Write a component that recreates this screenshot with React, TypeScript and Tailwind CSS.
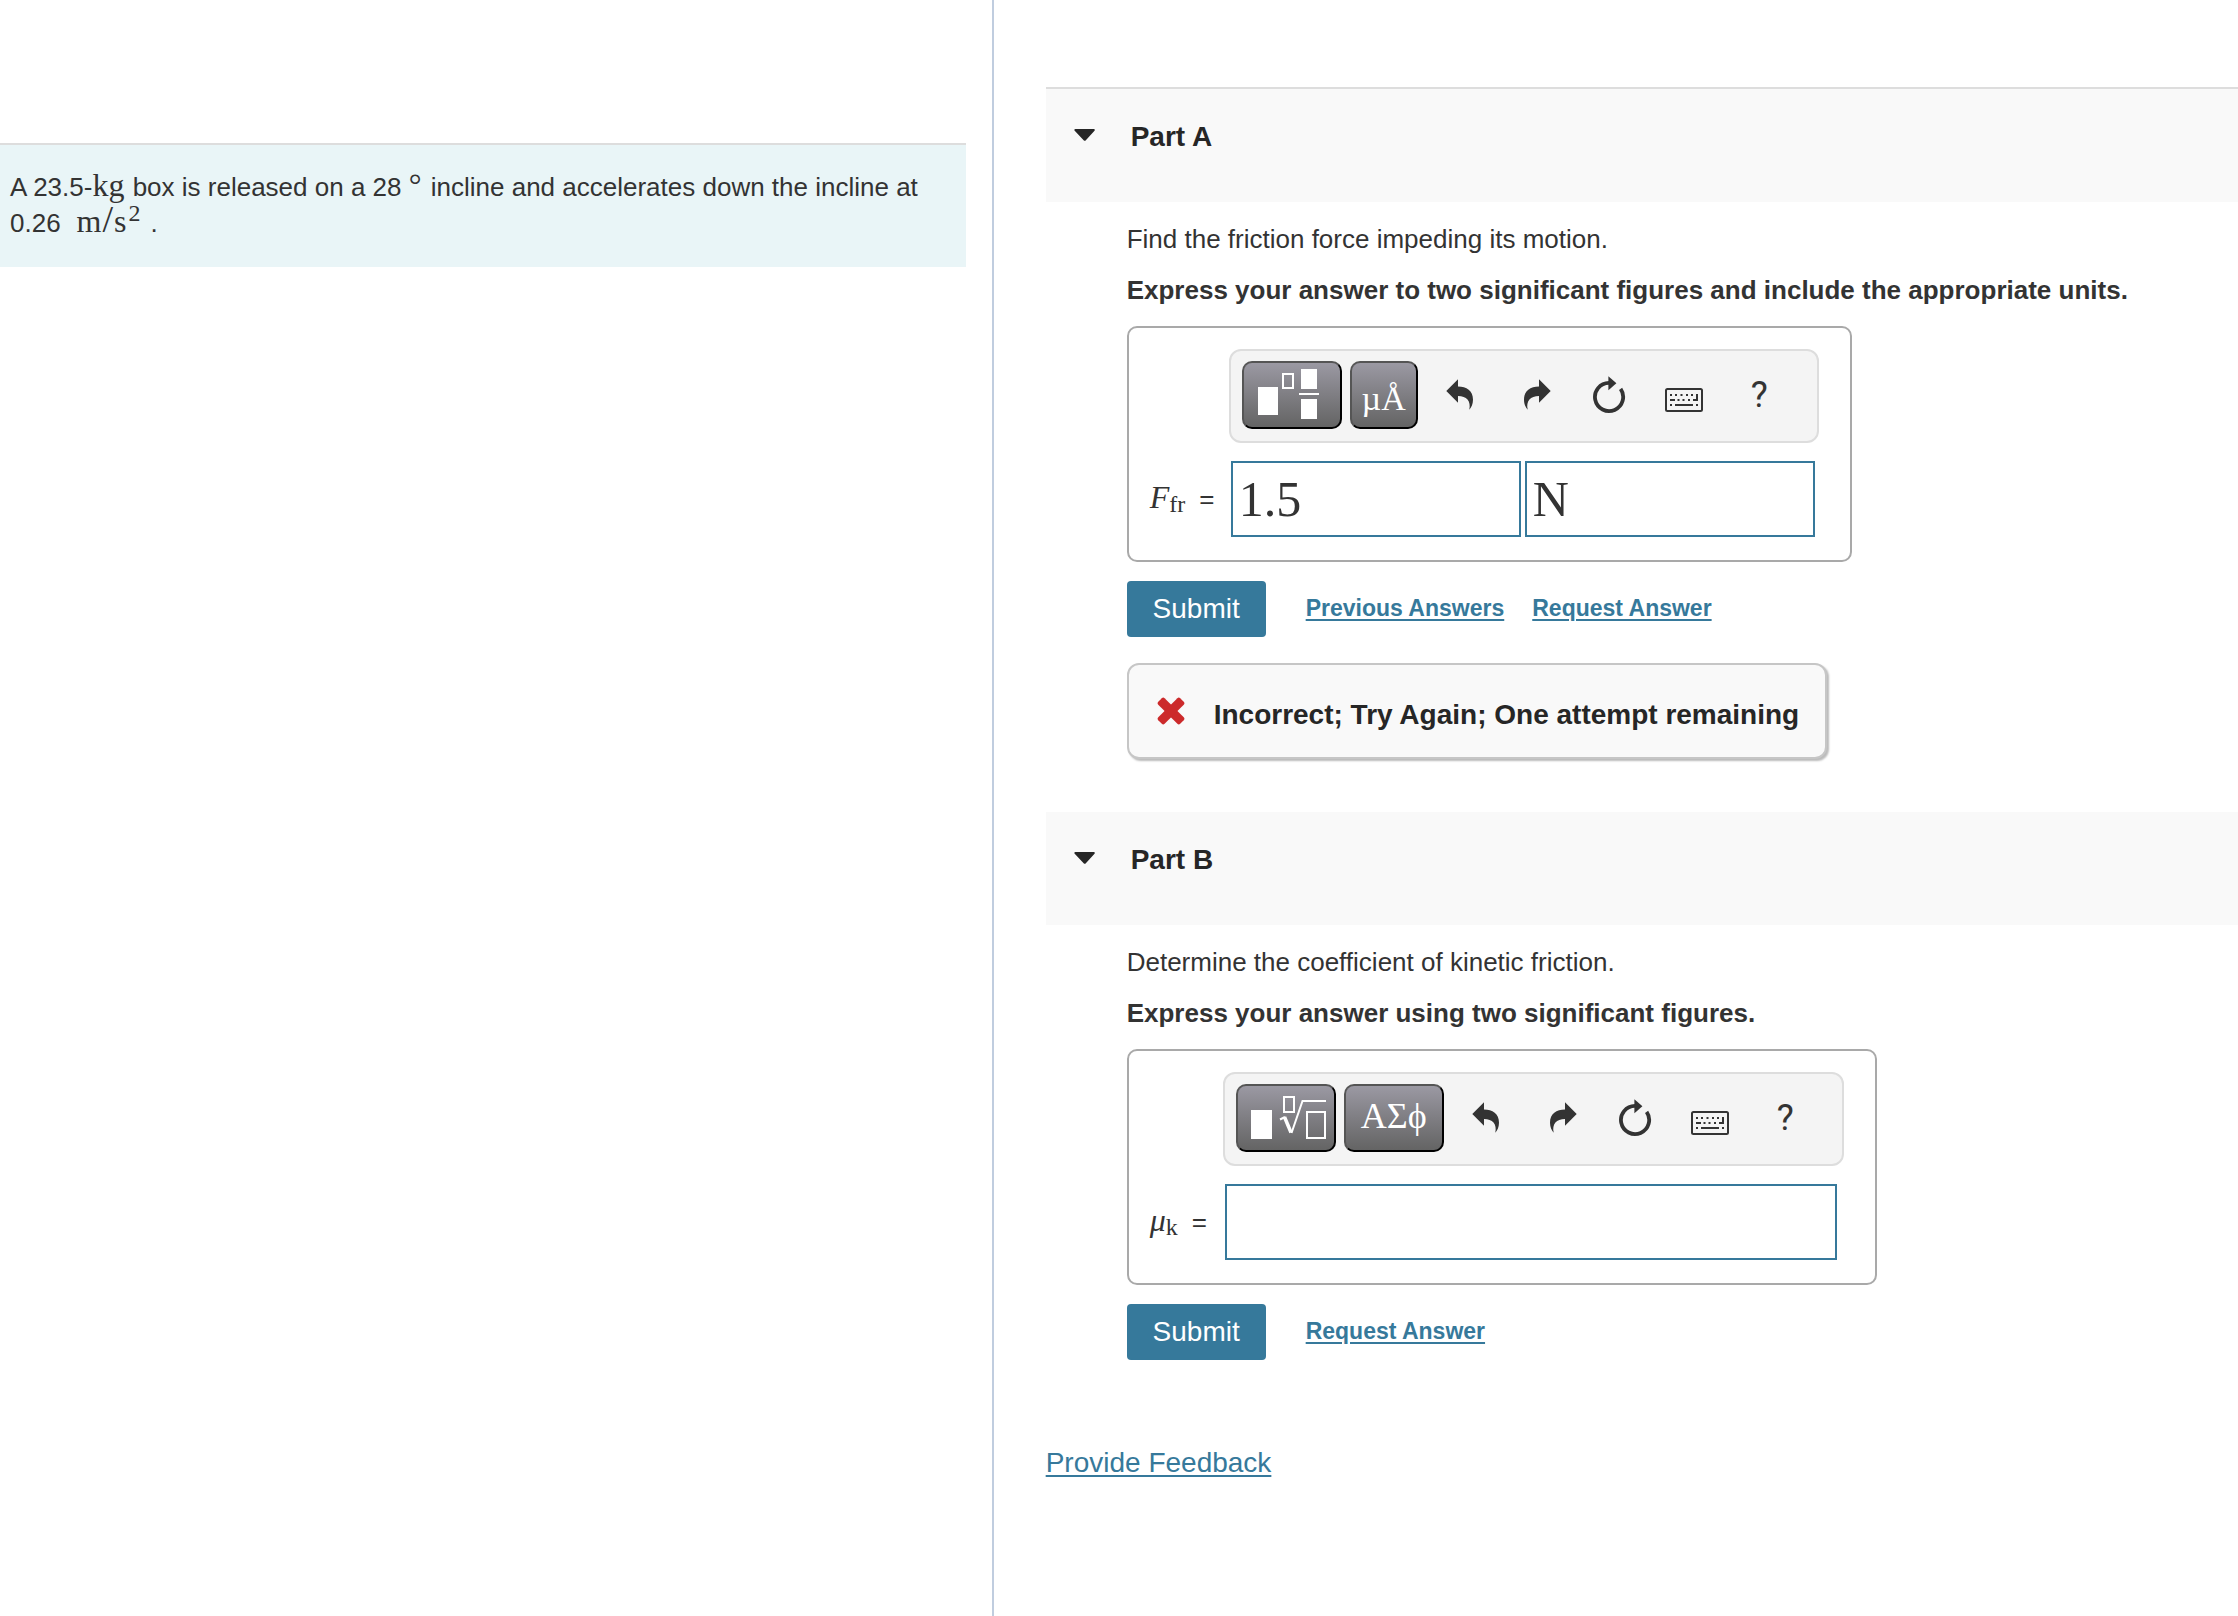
import { useState } from "react";
import type { ReactNode } from "react";

type PartProps = {
  title: string;
  question: string;
  instructions: string;
  bordered?: boolean;
  children: ReactNode;
};

function CaretIcon() {
  return (
    <svg aria-hidden width="22" height="16" viewBox="0 0 22 16" fill="#262626">
      <path d="M1.4 0h18.4c1 0 1.4 1 .7 1.8L11.6 11.4c-.5.6-1.2.6-1.7 0L.7 1.8C0 1 .4 0 1.4 0Z" />
    </svg>
  );
}

function UndoIcon() {
  return (
    <svg aria-hidden width="34" height="32" viewBox="-4 0 34 32" fill="#333">
      <path d="M.3 12 12 .3v7.2c8.500 0 15 4.200 15 13.200 0 4.300-1.600 7.800-3.700 10C25.200 22 20.500 17 12 17v6.700Z" />
    </svg>
  );
}

function RedoIcon() {
  return (
    <svg aria-hidden width="34" height="32" viewBox="-6 0 34 32" fill="#333">
      <path d="M27.700 12 16 .3v7.200C7.500 7.500 1 11.700 1 20.700c0 4.300 1.600 7.800 3.700 10C2.800 22 7.500 17 16 17v6.700Z" />
    </svg>
  );
}

function ResetIcon() {
  return (
    <svg aria-hidden width="34" height="38" viewBox="0 0 34 38">
      <path d="M28.600 12.900A14.100 14.100 0 1 1 17 6.900" fill="none" stroke="#333" strokeWidth="3.800" />
      <path d="M16.400 .3 24.400 7.300 16.400 14.300Z" fill="#333" />
    </svg>
  );
}

function KeyboardIcon() {
  return (
    <svg aria-hidden width="38" height="24" viewBox="0 0 38 24" fill="#333">
      <rect x="1" y="1" width="36" height="22" rx="1.500" fill="none" stroke="#333" strokeWidth="2" />
      <path d="M5 6h2v2H5zM10 6h2v2h-2zM15.500 6h2v2h-2zM21 6h2v2h-2zM26 6h2v2h-2zM31 6h2v7h-5v-2h3zM5 11h5v2H5zM12.500 11h2v2h-2zM17.500 11h2v2h-2zM23 11h2v2h-2zM5 16h2v2H5zM10 16h18v2H10zM31 16h2v2h-2z" />
    </svg>
  );
}

function TemplatesIcon() {
  return (
    <svg aria-hidden width="96" height="64" viewBox="2 2 96 64" fill="#fff">
      <rect x="16" y="26" width="20" height="28" />
      <rect x="41" y="13" width="10" height="14" fill="none" stroke="#fff" strokeWidth="2" />
      <rect x="59" y="8" width="16" height="20" />
      <rect x="57" y="32" width="20" height="2" />
      <rect x="59" y="38" width="16" height="20" />
    </svg>
  );
}

function RootIcon() {
  return (
    <svg aria-hidden width="96" height="64" viewBox="2 2 96 64" fill="none" stroke="#fff">
      <rect x="15" y="26" width="21" height="29" fill="#fff" stroke="none" />
      <rect x="48" y="13" width="10" height="15" strokeWidth="2" />
      <path d="M44 35.500 49 33M55.500 49 66.500 17H90" strokeWidth="2" />
      <path d="M48.500 33 55 48.500" strokeWidth="3.500" />
      <rect x="71" y="28" width="18" height="26" strokeWidth="2" />
    </svg>
  );
}

function CrossIcon() {
  return (
    <svg aria-hidden width="28" height="28" viewBox="0 0 28 28" fill="#cc2a2b">
      <rect x="-1.500" y="9.500" width="31" height="9" rx="2" transform="rotate(45 14 14)" />
      <rect x="-1.500" y="9.500" width="31" height="9" rx="2" transform="rotate(-45 14 14)" />
    </svg>
  );
}

const ACTIONS = [
  { label: "Undo", icon: <UndoIcon /> },
  { label: "Redo", icon: <RedoIcon /> },
  { label: "Reset", icon: <ResetIcon /> },
  { label: "Keyboard shortcuts", icon: <span className="pt-2.5"><KeyboardIcon /></span> },
  { label: "Help", icon: <span className="font-['Roboto',sans-serif] text-[36px] leading-none">?</span> },
];

const PALETTE_BUTTON =
  "flex h-[68px] shrink-0 items-center justify-center rounded-[10px] border-2 border-t-[#555] border-l-[#555] border-r-black border-b-black bg-linear-to-b from-[#9b99a3] to-[#646464] font-['Liberation_Serif',serif] leading-none text-white";

const MATH = "font-['Liberation_Serif',serif] text-[32px] leading-0";
const SUBSCRIPT = "align-[-4px] font-['Liberation_Serif',serif] text-[24px] leading-0";

function Toolbar({ children }: { children: ReactNode }) {
  return (
    <div
      role="toolbar"
      className="col-start-2 flex h-[94px] items-start gap-2 rounded-xl border-2 border-[#ddd] bg-[#f4f4f4] pl-[11px] pt-2.5"
    >
      {children}
      <div className="-ml-1 flex">
        {ACTIONS.map((action) => (
          <button
            key={action.label}
            type="button"
            aria-label={action.label}
            className="flex h-[68px] w-[75px] items-center justify-center text-[#333]"
          >
            {action.icon}
          </button>
        ))}
      </div>
    </div>
  );
}

function Part({ title, question, instructions, bordered, children }: PartProps) {
  const [open, setOpen] = useState(true);

  return (
    <section>
      <h2 className={`bg-[#f9f9f9] ${bordered ? "border-t-2 border-[#ddd]" : ""}`}>
        <button
          type="button"
          aria-expanded={open}
          onClick={() => setOpen(!open)}
          className="flex w-full items-center gap-[35px] pb-[47px] pl-7 pt-[30px] text-left text-[28px] font-bold leading-9 text-[#262626]"
        >
          <CaretIcon />
          {title}
        </button>
      </h2>
      {open && (
        <div className="pl-[81px] pt-[19px] text-[26px] leading-9">
          <p>{question}</p>
          <p className="mt-[15px] font-bold">{instructions}</p>
          {children}
        </div>
      )}
    </section>
  );
}

function Actions({ links }: { links: string[] }) {
  return (
    <div className="mt-[19px] flex items-center">
      <button type="submit" className="h-14 w-[139px] rounded bg-[#36799b] text-[28px] text-white">
        Submit
      </button>
      <div className="ml-10 flex gap-7 pb-0.5">
        {links.map((link) => (
          <a key={link} href="#" className="text-[23px] font-bold text-[#36799b] underline decoration-2 underline-offset-3">
            {link}
          </a>
        ))}
      </div>
    </div>
  );
}

const FRAME = "mt-[18px] grid w-fit items-center gap-y-[18px] rounded-[10px] border-2 border-[#a9a9a9] pb-[23px] pl-[21px] pr-[31px] pt-[21px]";
const FIELD = "h-[76px] border-2 border-[#36799b] bg-white px-1.5 font-['Liberation_Serif',serif] text-[50px] text-[#333] outline-none";

export default function App() {
  return (
    <div className="flex min-h-screen bg-white font-['Liberation_Sans',Arial,sans-serif] text-[#333]">
      <aside className="w-[44.4%] shrink-0 border-r-2 border-[#c0cddf] pr-[26px] pt-[143px]">
        <p className="border-t-2 border-[#ddd] bg-[#e9f5f7] pb-[26px] pl-2.5 pr-6 pt-6 text-[26px] leading-9">
          A 23.5-<span className={`mr-px ${MATH}`}>kg</span> box is released on a 28{" "}
          <span className={`mr-0.5 ${MATH}`}>°</span> incline and accelerates down the incline at 0.26
          <span className={`ml-4 ${MATH}`}>
            m<span className="mx-px text-[38px] leading-0">/</span>s
            <span className="ml-0.5 align-[11px] text-[24px] leading-0">2</span>
          </span>
          <span className="ml-2.5">.</span>
        </p>
      </aside>

      <main className="min-w-0 flex-1 pb-36 pl-[52px] pt-[87px]">
        <Part
          title="Part A"
          question="Find the friction force impeding its motion."
          instructions="Express your answer to two significant figures and include the appropriate units."
          bordered
        >
          <form onSubmit={(e) => e.preventDefault()}>
            <div className={`grid-cols-[79px_590px] ${FRAME}`}>
              <Toolbar>
                <button type="button" aria-label="Templates" className={`w-[100px] ${PALETTE_BUTTON}`}>
                  <TemplatesIcon />
                </button>
                <button type="button" aria-label="Units" className={`w-[68px] pt-2 text-[34px] ${PALETTE_BUTTON}`}>
                  µÅ
                </button>
              </Toolbar>
              <label htmlFor="friction" className="whitespace-nowrap">
                <span className={`italic ${MATH}`}>F</span>
                <span className={SUBSCRIPT}>fr</span>
                <span className="ml-3.5">=</span>
              </label>
              <div className="flex gap-1 pl-0.5">
                <input id="friction" defaultValue="1.5" className={`w-[290px] ${FIELD}`} />
                <input aria-label="Units" defaultValue="N" className={`w-[290px] ${FIELD}`} />
              </div>
            </div>
            <Actions links={["Previous Answers", "Request Answer"]} />
          </form>
          <div
            role="status"
            className="mb-[53px] mt-[26px] flex h-24 w-[700px] items-start gap-[29px] rounded-xl border-2 border-[#c6c6c6] bg-[#f9f9f9] pl-7 pt-8 text-[28px] font-bold text-[#262626] shadow-[2px_2px_2px_#bbb]"
          >
            <CrossIcon />
            <span className="whitespace-nowrap">Incorrect; Try Again; One attempt remaining</span>
          </div>
        </Part>

        <Part
          title="Part B"
          question="Determine the coefficient of kinetic friction."
          instructions="Express your answer using two significant figures."
        >
          <form onSubmit={(e) => e.preventDefault()}>
            <div className={`grid-cols-[73px_621px] ${FRAME}`}>
              <Toolbar>
                <button type="button" aria-label="Templates" className={`w-[100px] ${PALETTE_BUTTON}`}>
                  <RootIcon />
                </button>
                <button type="button" aria-label="Greek letters" className={`w-[100px] pb-1 text-[36px] ${PALETTE_BUTTON}`}>
                  ΑΣϕ
                </button>
              </Toolbar>
              <label htmlFor="coefficient" className="whitespace-nowrap">
                <span className={`italic ${MATH}`}>μ</span>
                <span className={SUBSCRIPT}>k</span>
                <span className="ml-3.5">=</span>
              </label>
              <div className="pl-0.5">
                <input id="coefficient" className={`block w-[612px] ${FIELD}`} />
              </div>
            </div>
            <Actions links={["Request Answer"]} />
          </form>
        </Part>

        <a href="#" className="mt-[85px] inline-block text-[28px] leading-9 text-[#36799b] underline decoration-2 underline-offset-3">
          Provide Feedback
        </a>
      </main>
    </div>
  );
}
